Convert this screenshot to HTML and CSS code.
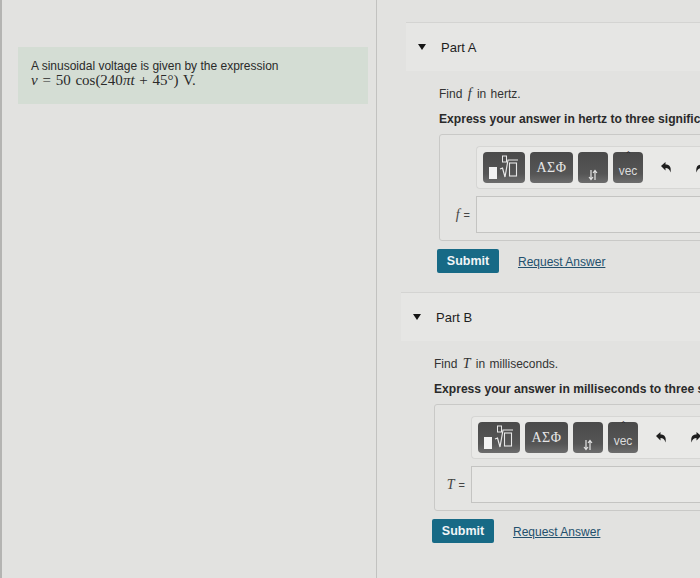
FILE: index.html
```html
<!DOCTYPE html>
<html>
<head>
<meta charset="utf-8">
<link rel="stylesheet" href="styles.css">
</head>
<body>
<div class="page">
  <div class="left">
    <div class="problem">
      <div class="ptext">A sinusoidal voltage is given by the expression</div>
      <div class="pmath"><i>v</i> = 50 cos(240<i>πt</i> + 45°) V.</div>
    </div>
  </div>
  <div class="right">
    <section class="part">
      <div class="part-head"><span class="tri"></span><span class="part-title">Part A</span></div>
      <div class="part-body">
        <div class="find">Find <i class="mv">f</i> in hertz.</div>
        <div class="express">Express your answer in hertz to three significant figures.</div>
        <div class="answer-box">
          <div class="toolbar">
            <span class="tbtn w42">
              <svg width="42" height="31" viewBox="0 0 42 31"><rect x="6" y="15" width="8" height="12" fill="#f2f2f2"/><rect x="19.5" y="4" width="4" height="6" fill="none" stroke="#e8e8e8" stroke-width="1"/><path d="M17 17 L19.5 16 L22 25 L25 8 L35 8" fill="none" stroke="#e8e8e8" stroke-width="1.2"/><rect x="26.5" y="11" width="7" height="13" fill="none" stroke="#e8e8e8" stroke-width="1.1"/></svg>
            </span>
            <span class="tbtn w43 greek">ΑΣΦ</span>
            <span class="tbtn w30">
              <svg width="30" height="31" viewBox="0 0 30 31"><path d="M13 18 V27 M11 25 L13 27.5 L15 25" fill="none" stroke="#e4e4e4" stroke-width="1.2"/><path d="M17 28 V19 M15 21 L17 18.5 L19 21" fill="none" stroke="#e4e4e4" stroke-width="1.2"/></svg>
            </span>
            <span class="tbtn w30 vec"><span class="vecmark">⌃</span>vec</span>
            <span class="ibtn">
              <svg width="16" height="16" viewBox="0 0 16 16"><path d="M3 6 L7.5 2 L7.5 4.6 C11.5 4.6 13.5 7 12.5 12.5 C11.5 9 10 8 7.5 8 L7.5 10.5 Z" fill="#1e1e1e"/></svg>
            </span>
            <span class="ibtn">
              <svg width="16" height="16" viewBox="0 0 16 16"><path d="M13 6 L8.5 2 L8.5 4.6 C4.5 4.6 2.5 7 3.5 12.5 C4.5 9 6 8 8.5 8 L8.5 10.5 Z" fill="#1e1e1e"/></svg>
            </span>
          </div>
          <div class="input-row">
            <span class="lbl"><i class="mv">f</i> =</span>
            <span class="input"></span>
          </div>
        </div>
        <div class="actions">
          <span class="submit">Submit</span>
          <span class="req">Request Answer</span>
        </div>
      </div>
    </section>
    <section class="part partb">
      <div class="part-head"><span class="tri"></span><span class="part-title">Part B</span></div>
      <div class="part-body">
        <div class="find">Find <i class="mv">T</i> in milliseconds.</div>
        <div class="express">Express your answer in milliseconds to three significant figures.</div>
        <div class="answer-box">
          <div class="toolbar">
            <span class="tbtn w42">
              <svg width="42" height="31" viewBox="0 0 42 31"><rect x="6" y="15" width="8" height="12" fill="#f2f2f2"/><rect x="19.5" y="4" width="4" height="6" fill="none" stroke="#e8e8e8" stroke-width="1"/><path d="M17 17 L19.5 16 L22 25 L25 8 L35 8" fill="none" stroke="#e8e8e8" stroke-width="1.2"/><rect x="26.5" y="11" width="7" height="13" fill="none" stroke="#e8e8e8" stroke-width="1.1"/></svg>
            </span>
            <span class="tbtn w43 greek">ΑΣΦ</span>
            <span class="tbtn w30">
              <svg width="30" height="31" viewBox="0 0 30 31"><path d="M13 18 V27 M11 25 L13 27.5 L15 25" fill="none" stroke="#e4e4e4" stroke-width="1.2"/><path d="M17 28 V19 M15 21 L17 18.5 L19 21" fill="none" stroke="#e4e4e4" stroke-width="1.2"/></svg>
            </span>
            <span class="tbtn w30 vec"><span class="vecmark">⌃</span>vec</span>
            <span class="ibtn">
              <svg width="16" height="16" viewBox="0 0 16 16"><path d="M3 6 L7.5 2 L7.5 4.6 C11.5 4.6 13.5 7 12.5 12.5 C11.5 9 10 8 7.5 8 L7.5 10.5 Z" fill="#1e1e1e"/></svg>
            </span>
            <span class="ibtn">
              <svg width="16" height="16" viewBox="0 0 16 16"><path d="M13 6 L8.5 2 L8.5 4.6 C4.5 4.6 2.5 7 3.5 12.5 C4.5 9 6 8 8.5 8 L8.5 10.5 Z" fill="#1e1e1e"/></svg>
            </span>
          </div>
          <div class="input-row">
            <span class="lbl"><i class="mv">T</i> =</span>
            <span class="input"></span>
          </div>
        </div>
        <div class="actions">
          <span class="submit">Submit</span>
          <span class="req">Request Answer</span>
        </div>
      </div>
    </section>
  </div>
</div>
</body>
</html>
```
FILE: styles.css
```css
html, body {
  margin: 0;
  padding: 0;
  background: #e2e2e0;
  overflow: hidden;
}
.page {
  display: flex;
  width: 700px;
  height: 578px;
  overflow: hidden;
  font-family: "Liberation Sans", Arial, sans-serif;
  color: #222;
  border-left: 2px solid #b4b4b2;
  box-sizing: border-box;
}
.left {
  width: 374px;
  flex: none;
  border-right: 1px solid #c2c2c0;
  padding-top: 47px;
}
.problem {
  margin-left: 16px;
  width: 350px;
  height: 57px;
  background: #d4ddd4;
  box-sizing: border-box;
  padding: 12px 13px;
}
.ptext {
  font-size: 12px;
  line-height: 14px;
  color: #2a2a2a;
}
.pmath {
  font-family: "Liberation Serif", "Times New Roman", serif;
  font-size: 15px;
  line-height: 15px;
  color: #2a2a2a;
  word-spacing: 1px;
}
.right {
  flex: 1;
  min-width: 0;
  padding-top: 22px;
  overflow: hidden;
}
.part {
  margin-left: 29px;
}
.partb {
  margin-top: 19px;
  margin-left: 24px;
}
.part-head {
  height: 48px;
  display: flex;
  align-items: center;
  padding-left: 12px;
  background: #e6e6e4;
  border-top: 1px solid #d4d4d2;
}
.tri {
  width: 0;
  height: 0;
  border-top: 6px solid #151515;
  border-left: 4.5px solid transparent;
  border-right: 4.5px solid transparent;
  margin-right: 15px;
}
.part-title {
  font-size: 13px;
  color: #1e1e1e;
}
.part-body {
  padding-left: 33px;
  padding-top: 15px;
  white-space: nowrap;
}
.find {
  font-size: 12px;
  line-height: 16px;
  color: #333;
  word-spacing: 1px;
}
.mv {
  font-family: "Liberation Serif", "Times New Roman", serif;
  font-size: 14px;
  padding: 0 1px;
}
.express {
  margin-top: 9px;
  font-size: 12.1px;
  font-weight: bold;
  line-height: 16px;
  color: #2a2a2a;
}
.answer-box {
  margin-top: 7px;
  width: 320px;
  height: 107px;
  box-sizing: border-box;
  border: 1px solid #c9c9c7;
  border-radius: 3px;
  background: #e4e4e2;
  padding: 11px 0 0 36px;
}
.toolbar {
  display: flex;
  align-items: center;
  gap: 5px;
  height: 43px;
  box-sizing: border-box;
  padding: 0 6px;
  background: #e9e9e7;
  border: 1px solid #d6d6d4;
  border-right: none;
  border-radius: 4px 0 0 4px;
}
.tbtn {
  height: 31px;
  border-radius: 4px;
  background: linear-gradient(#4a4a4a 0, #555 70%, #6d6d6d 100%);
  color: #e6e6e6;
  display: flex;
  align-items: center;
  justify-content: center;
  box-sizing: border-box;
  position: relative;
}
.w42 { width: 42px; }
.w43 { width: 43px; }
.w30 { width: 30px; }
.greek {
  font-family: "Liberation Serif", "Times New Roman", serif;
  font-size: 14px;
  letter-spacing: 0.5px;
}
.vec {
  font-size: 12px;
  padding-top: 6px;
  color: #dcdcdc;
}
.vecmark {
  position: absolute;
  top: -2px;
  left: 12px;
  font-size: 8px;
  color: #222;
}
.ibtn {
  width: 24px;
  height: 24px;
  display: flex;
  align-items: center;
  justify-content: center;
  margin-left: 6px;
}
.input-row {
  display: flex;
  align-items: center;
  margin-top: 7px;
  margin-left: -36px;
}
.lbl {
  width: 30px;
  text-align: right;
  margin-right: 6px;
  font-size: 11px;
  color: #444;
}
.input {
  flex: 1;
  height: 37px;
  box-sizing: border-box;
  border: 1px solid #c4c4c2;
  border-right: none;
  background: #e8e8e6;
}
.actions {
  display: flex;
  align-items: center;
  margin-top: 8px;
  margin-left: -2px;
}
.submit {
  width: 62px;
  height: 24px;
  background: #176a86;
  color: #f1f5f7;
  font-size: 12.5px;
  font-weight: bold;
  display: flex;
  align-items: center;
  justify-content: center;
  border-radius: 2px;
}
.req {
  margin-left: 19px;
  font-size: 12px;
  color: #23506d;
  text-decoration: underline;
  padding-top: 2px;
}
```
